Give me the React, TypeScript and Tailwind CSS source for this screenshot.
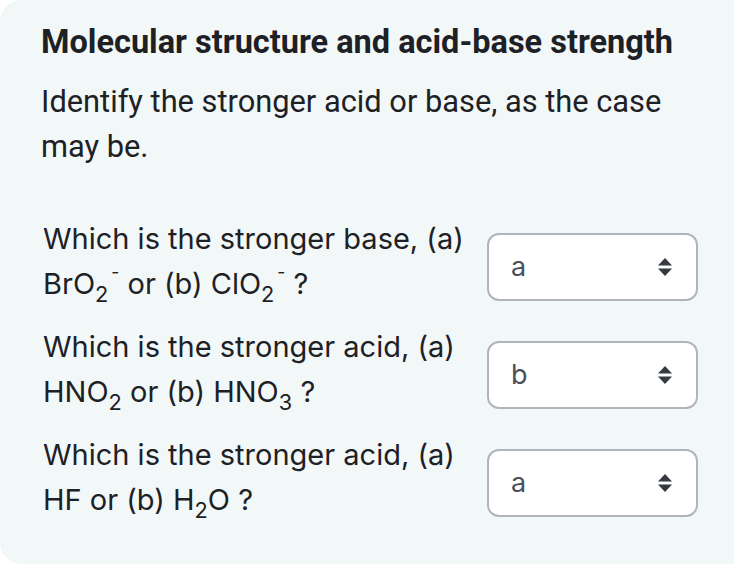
import React from 'react';

const Sub = ({ children }: { children: React.ReactNode }) => (
  <sub className="text-[0.75em] align-[-0.12em] leading-none">{children}</sub>
);

const Minus = () => <sup className="text-[0.6em] align-[0.4em] leading-none ml-[3px]">-</sup>;

const questions = [
  {
    id: 1,
    text: (
      <>
        Which is the stronger base, (a) BrO<Sub>2</Sub>
        <Minus /> or (b) ClO<Sub>2</Sub>
        <Minus /> ?
      </>
    ),
    value: 'a',
  },
  {
    id: 2,
    text: (
      <>
        Which is the stronger acid, (a) HNO<Sub>2</Sub> or (b) HNO<Sub>3</Sub> ?
      </>
    ),
    value: 'b',
  },
  {
    id: 3,
    text: (
      <>
        Which is the stronger acid, (a) HF or (b) H<Sub>2</Sub>O ?
      </>
    ),
    value: 'a',
  },
];

const SelectArrows = () => (
  <svg width="16" height="20" viewBox="0 0 16 20" className="text-[#343a40]">
    <path d="M8 1 L15 8.5 H1 Z" fill="currentColor" />
    <path d="M8 19 L15 11.5 H1 Z" fill="currentColor" />
  </svg>
);

export default function App() {
  return (
    <div className="min-h-[566px] bg-white">
      <div className="bg-[#f2f7f8] rounded-l-[22px] h-[564px] pl-[41px] pr-[38px] pt-[25px]">
        <h2 className="font-['Roboto',sans-serif] font-bold text-[32.5px] leading-[34px] text-[#1d2125]">
          Molecular structure and acid-base strength
        </h2>
        <p className="mt-[20px] font-['Roboto',sans-serif] text-[30.8px] leading-[45px] text-[#1d2125]">
          Identify the stronger acid or base, as the case may be.
        </p>
        <div className="mt-[47px] flex flex-col gap-[18px]">
          {questions.map((q) => (
            <div key={q.id} className="flex items-start justify-between">
              <div className="w-[435px] pl-[2px] font-['Inter',sans-serif] text-[29px] leading-[45px] text-[#1d2125]">
                {q.text}
              </div>
              <div className="mt-[17px] -mr-[2px] w-[211px] h-[68px] rounded-[12px] border-2 border-[#b0b5bb] bg-white flex items-center justify-between pl-[22px] pr-[23px]">
                <span className="font-['Inter',sans-serif] text-[27px] text-[#495057]">{q.value}</span>
                <SelectArrows />
              </div>
            </div>
          ))}
        </div>
      </div>
    </div>
  );
}
